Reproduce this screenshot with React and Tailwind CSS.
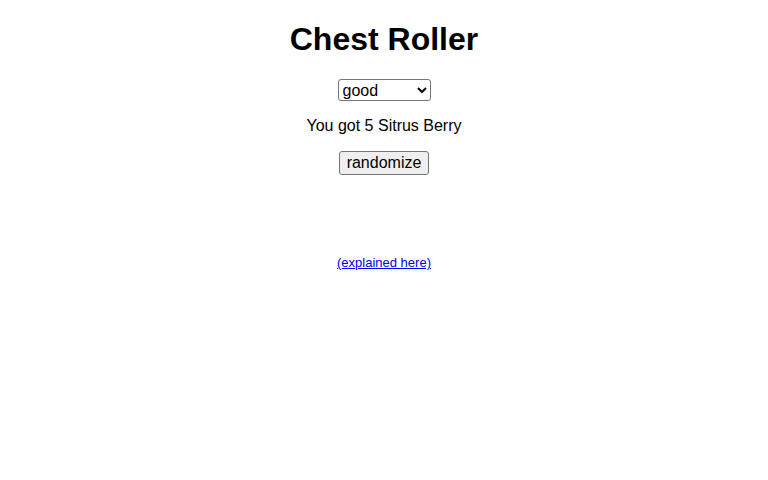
import { useState } from 'react'

// Chest tiers and what each one can hand out.
const LOOT = {
  good: ['Sitrus Berry', 'Oran Berry', 'Potion'],
  great: ['Rare Candy', 'Max Potion'],
  bad: ['Poké Ball', 'Pecha Berry'],
}

export default function App() {
  const [tier, setTier] = useState('good')
  const [roll, setRoll] = useState({ count: 5, item: 'Sitrus Berry' })

  const randomize = () => {
    const pool = LOOT[tier]
    setRoll({
      count: 1 + Math.floor(Math.random() * 5),
      item: pool[Math.floor(Math.random() * pool.length)],
    })
  }

  return (
    <div className="min-h-[480px] bg-white text-center text-black font-['Liberation_Sans',Arial,sans-serif]">
      <h1 className="pt-[21px] mb-[21px] text-[32px] font-bold leading-[37px]">Chest Roller</h1>

      <div className="flex justify-center">
        <select
          value={tier}
          onChange={(e) => setTier(e.target.value)}
          className="h-[22px] w-[93px] rounded-[3px] border border-[#767676] bg-white pl-0 text-[16px] leading-[19px]"
        >
          <option value="good">good</option>
          <option value="great">great</option>
          <option value="bad">bad</option>
        </select>
      </div>

      <p className="my-[16px] text-[16px] leading-[18px]">
        You got {roll.count} {roll.item}
      </p>

      <div className="flex justify-center">
        <button
          onClick={randomize}
          className="h-[24px] rounded-[3px] border border-[#767676] bg-[#efefef] px-[7px] text-[16px] leading-[18px]"
        >
          randomize
        </button>
      </div>

      <p className="mt-[80px] text-[13px] leading-[15px]">
        <a href="#" className="text-[#0000ee] underline">(explained here)</a>
      </p>
    </div>
  )
}
